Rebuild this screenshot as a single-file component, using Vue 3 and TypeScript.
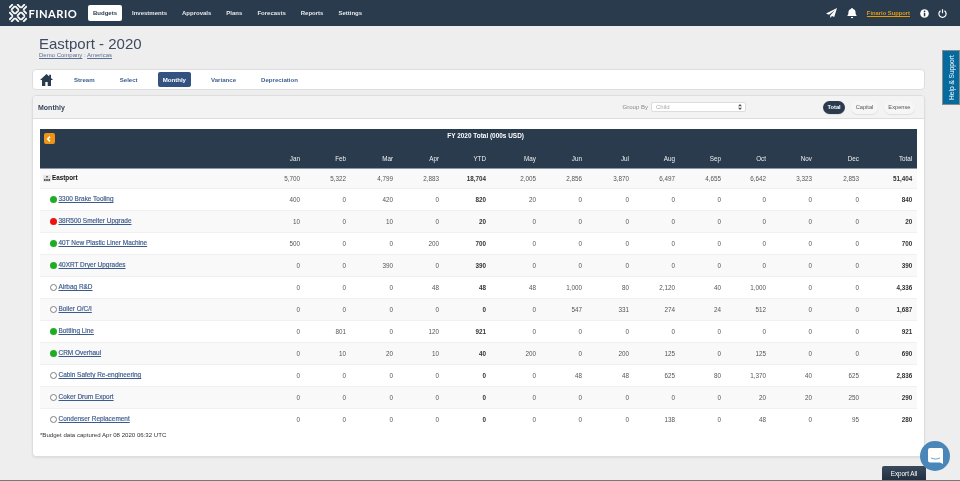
<script setup lang="ts">
const nav = ['Investments', 'Approvals', 'Plans', 'Forecasts', 'Reports', 'Settings']
const tabs = ['Stream', 'Select', 'Monthly', 'Variance', 'Depreciation']
const months = ['Jan', 'Feb', 'Mar', 'Apr', 'YTD', 'May', 'Jun', 'Jul', 'Aug', 'Sep', 'Oct', 'Nov', 'Dec', 'Total']
const widths = [45, 46, 47, 46, 47, 50, 46, 47, 46, 46, 45, 46, 47, 53]
const rollup = ['5,700', '5,322', '4,799', '2,883', '18,704', '2,005', '2,856', '3,870', '6,497', '4,655', '6,642', '3,323', '2,853', '51,404']
type Row = { name: string; status: 'green' | 'red' | 'idle'; values: string[] }
const rows: Row[] = [
  { name: '3300 Brake Tooling', status: 'green', values: ['400', '0', '420', '0', '820', '20', '0', '0', '0', '0', '0', '0', '0', '840'] },
  { name: '38R500 Smelter Upgrade', status: 'red', values: ['10', '0', '10', '0', '20', '0', '0', '0', '0', '0', '0', '0', '0', '20'] },
  { name: '40T New Plastic Liner Machine', status: 'green', values: ['500', '0', '0', '200', '700', '0', '0', '0', '0', '0', '0', '0', '0', '700'] },
  { name: '40XRT Dryer Upgrades', status: 'green', values: ['0', '0', '390', '0', '390', '0', '0', '0', '0', '0', '0', '0', '0', '390'] },
  { name: 'Airbag R&D', status: 'idle', values: ['0', '0', '0', '48', '48', '48', '1,000', '80', '2,120', '40', '1,000', '0', '0', '4,336'] },
  { name: 'Boiler O/C/I', status: 'idle', values: ['0', '0', '0', '0', '0', '0', '547', '331', '274', '24', '512', '0', '0', '1,687'] },
  { name: 'Bottling Line', status: 'green', values: ['0', '801', '0', '120', '921', '0', '0', '0', '0', '0', '0', '0', '0', '921'] },
  { name: 'CRM Overhaul', status: 'green', values: ['0', '10', '20', '10', '40', '200', '0', '200', '125', '0', '125', '0', '0', '690'] },
  { name: 'Cabin Safety Re-engineering', status: 'idle', values: ['0', '0', '0', '0', '0', '0', '48', '48', '625', '80', '1,370', '40', '625', '2,836'] },
  { name: 'Coker Drum Export', status: 'idle', values: ['0', '0', '0', '0', '0', '0', '0', '0', '0', '0', '20', '20', '250', '290'] },
  { name: 'Condenser Replacement', status: 'idle', values: ['0', '0', '0', '0', '0', '0', '0', '0', '138', '0', '48', '0', '95', '280'] },
]
const isBold = (i: number) => i === 4 || i === 13

// Basket-weave logo: alternating blocks of short diagonal strokes.
const weave = (() => {
  let d = ''
  for (let r = 0; r < 3; r++) {
    for (let c = 0; c < 3; c++) {
      const x = c * 6
      const y = r * 6
      if ((r + c) % 2 === 1) {
        d += `M${x + 0.2} ${y + 2.2}l3.6 3.6M${x + 2.2} ${y + 0.2}l3.6 3.6`
      } else {
        d += `M${x + 0.2} ${y + 3.8}l3.6-3.6M${x + 2.2} ${y + 5.8}l3.6-3.6`
      }
    }
  }
  return d
})()
</script>

<template>
  <div class="page">
    <header class="topbar">
      <div class="brand">
        <svg class="logo" viewBox="0 0 18 18" width="18" height="18">
          <path :d="weave" stroke="#fff" stroke-width="1.800" fill="none" />
        </svg>
        <span class="brand-name">FINARIO</span>
      </div>
      <nav class="nav">
        <a class="nav-item active">Budgets</a>
        <a v-for="n in nav" :key="n" class="nav-item">{{ n }}</a>
      </nav>
      <div class="top-right">
        <svg width="11" height="10" viewBox="0 0 11 10"><path d="M11 0 0 5.500l3 1.300L9 2 4.200 7.500V10l1.800-2 2.200 1z" fill="#fff" /></svg>
        <svg width="10" height="11" viewBox="0 0 10 11"><path d="M5 0a1 1 0 0 1 1 1c2 .4 2.600 2 2.600 4 0 1.600.6 2.300 1.400 3H0c.8-.7 1.400-1.400 1.400-3 0-2 .6-3.600 2.600-4a1 1 0 0 1 1-1zM3.800 9h2.400a1.200 1.200 0 0 1-2.400 0z" fill="#fff" /></svg>
        <a class="support">Finario Support</a>
        <svg width="9" height="9" viewBox="0 0 9 9"><circle cx="4.500" cy="4.500" r="4.300" fill="#fff" /><rect x="3.800" y="3.700" width="1.500" height="3.600" fill="#2a3b4e" /><rect x="3.800" y="1.600" width="1.500" height="1.400" fill="#2a3b4e" /></svg>
        <svg class="power" width="9" height="9" viewBox="0 0 9 9" fill="none" stroke="#fff" stroke-width="1.200"><path d="M2.500 1.800a3.600 3.600 0 1 0 4 0M4.500 .3v4" /></svg>
      </div>
    </header>

    <main class="content">
      <div class="heading">
        <h1>Eastport - 2020</h1>
        <div class="crumbs"><a>Demo Company</a> : <a>Americas</a></div>
      </div>

      <div class="toolbar">
        <svg class="home" width="13" height="12" viewBox="0 0 13 12"><path d="M6.500 0 0 6h2v6h3.300V8h2.400v4H11V6h2l-2-1.900V.8H9.200v1.600z" fill="#2a3b4e" /></svg>
        <a v-for="t in tabs" :key="t" class="tab" :class="{ on: t === 'Monthly' }">{{ t }}</a>
      </div>

      <section class="panel">
        <div class="panel-head">
          <span class="panel-title">Monthly</span>
          <div class="group">
            <label>Group By</label>
            <div class="select"><span>Child</span><svg width="4" height="6" viewBox="0 0 4 6"><path d="M2 0 4 2.300H0zM2 6 0 3.700h4z" fill="#555" /></svg></div>
          </div>
          <div class="pills">
            <span class="pill on">Total</span>
            <span class="pill">Capital</span>
            <span class="pill">Expense</span>
          </div>
        </div>

        <div class="panel-body">
          <table class="grid">
            <colgroup>
              <col class="name-col" />
              <col v-for="(w, i) in widths" :key="i" :style="{ width: w + 'px' }" />
            </colgroup>
            <thead>
              <tr class="caption-row">
                <th :colspan="15">
                  <span class="back"><svg width="6" height="6" viewBox="0 0 6 6" fill="none" stroke="#fff" stroke-width="1.500"><path d="M4 .6 1.600 3 4 5.400" /></svg></span>
                  FY 2020 Total (000s USD)
                </th>
              </tr>
              <tr class="month-row">
                <th></th>
                <th v-for="m in months" :key="m">{{ m }}</th>
              </tr>
            </thead>
            <tbody>
              <tr class="rollup">
                <td class="name"><span class="tree"><svg width="6" height="5" viewBox="0 0 6 5"><path d="M2.200 0h1.600v1.500H2.200zM0 3h1.600v2H0zM2.200 3h1.600v2H2.200zM4.400 3H6v2H4.400z" fill="#555" /></svg></span><span class="root">Eastport</span></td>
                <td v-for="(v, i) in rollup" :key="i" :class="{ strong: isBold(i) }">{{ v }}</td>
              </tr>
              <tr v-for="r in rows" :key="r.name" class="item">
                <td class="name"><span class="dot" :class="r.status"></span><a>{{ r.name }}</a></td>
                <td v-for="(v, i) in r.values" :key="i" :class="{ strong: isBold(i) }">{{ v }}</td>
              </tr>
            </tbody>
          </table>
          <p class="note">*Budget data captured Apr 08 2020 06:32 UTC</p>
        </div>
      </section>
    </main>

    <button class="export">Export All</button>
    <div class="help">Help &amp; Support</div>
    <div class="chat">
      <svg width="15" height="16" viewBox="0 0 15 16"><path d="M2 0h11a2 2 0 0 1 2 2v14l-3-1.500H2a2 2 0 0 1-2-2V2a2 2 0 0 1 2-2z" fill="#fff" /><path d="M3 10c3 1.400 6 1.400 9 0" fill="none" stroke="#4a86b8" stroke-width=".8" /></svg>
    </div>
    <div class="edge"></div>
  </div>
</template>

<style>
html, body { margin: 0; background: #eeeeee; }
</style>

<style scoped>
.page {
  position: relative;
  width: 960px;
  height: 481px;
  overflow: hidden;
  background: #eee;
  font-family: "Liberation Sans", Arial, sans-serif;
  color: #333;
  filter: blur(.3px);
}
.topbar {
  height: 26px;
  background: #2a3b4e;
  display: flex;
  align-items: center;
  padding: 0 13px 0 9px;
}
.brand { display: flex; align-items: center; gap: 1.500px; width: 79px; }
.brand-name { font-family: Lato, sans-serif; font-weight: 700; color: #fff; font-size: 11.200px; letter-spacing: .45px; }
.nav { display: flex; align-items: center; }
.nav-item {
  color: #e4e8ec;
  font-size: 6px;
  font-weight: 700;
  padding: 0 7.500px;
  line-height: 16px;
  border-radius: 2px;
}
.nav-item.active { background: #fff; color: #2a3b4e; margin-right: 2.500px; padding: 0 5px; }
.top-right { margin-left: auto; display: flex; align-items: center; gap: 10px; }
.power { margin-left: -1px; }
.support { color: #e39a10; font-size: 5.800px; text-decoration: underline; font-weight: 700; }
.content { padding: 0 35px 0 32px; }
.heading { padding: 9px 0 0 7px; height: 43px; box-sizing: border-box; }
h1 { margin: 0; font-size: 15px; font-weight: 400; color: #3f4a63; line-height: 17px; }
.crumbs { font-size: 6px; color: #5c6f93; line-height: 7px; }
.crumbs a { text-decoration: underline; }
.toolbar {
  height: 21px;
  box-sizing: border-box;
  background: #fff;
  border: 1px solid #ddd;
  border-radius: 4px;
  display: flex;
  align-items: center;
  padding-left: 7px;
  gap: 15px;
}
.home { margin-right: 1px; }
.tab {
  color: #3f5f92;
  font-size: 6.100px;
  font-weight: 700;
  line-height: 15px;
  padding: 0 5px;
  border-radius: 2px;
}
.tab.on { background: #34527f; color: #fff; }
.panel {
  margin-top: 5px;
  height: 362px;
  box-sizing: border-box;
  background: #fff;
  border: 1px solid #ddd;
  border-radius: 4px;
  box-shadow: 0 1px 2px rgba(0, 0, 0, .08);
}
.panel-head {
  height: 23px;
  box-sizing: border-box;
  background: #f3f3f3;
  border-bottom: 1px solid #ddd;
  border-radius: 4px 4px 0 0;
  display: flex;
  align-items: center;
  padding: 0 9px 0 5px;
}
.panel-title { font-size: 7px; font-weight: 700; color: #3a4658; }
.group { margin-left: auto; display: flex; align-items: center; gap: 3px; font-size: 6px; color: #888; }
.select {
  width: 95px;
  height: 10px;
  box-sizing: border-box;
  background: #fff;
  border: 1px solid #ddd;
  border-radius: 2px;
  display: flex;
  align-items: center;
  justify-content: space-between;
  padding: 0 3px 0 4px;
  color: #aaa;
}
.pills { margin-left: 77px; display: flex; align-items: center; gap: 6px; }
.pill {
  font-size: 5.700px;
  color: #555;
  font-weight: 400;
  padding: 0 4.500px;
  line-height: 13px;
  border-radius: 7px;
  background: #f6f6f6;
  box-shadow: 0 1px 1px rgba(0, 0, 0, .08);
}
.pill.on { background: #2a3b4e; color: #fff; font-weight: 700; }
.panel-body { padding: 10px 7px 0 7px; }
.grid {
  width: 877px;
  table-layout: fixed;
  border-collapse: collapse;
  font-size: 6.300px;
}
.name-col { width: 220px; }
.caption-row th { height: 23px; position: relative; background: #2a3b4e; color: #fff; font-size: 6.450px; font-weight: 700; vertical-align: top; padding: 3px 0 0 14px; box-sizing: border-box; }
.back {
  position: absolute;
  left: 3.500px;
  top: 4px;
  width: 11px;
  height: 11px;
  background: #ee9414;
  border-radius: 2px;
  display: flex;
  align-items: center;
  justify-content: center;
}
.month-row th {
  height: 16px;
  box-sizing: border-box;
  background: #2a3b4e;
  color: #eef0f2;
  font-size: 6.300px;
  font-weight: 400;
  text-align: right;
  padding: 0 5px 2px 0;
  vertical-align: middle;
  border-bottom: 1px solid #8a97aa;
}
td {
  text-align: right;
  padding: 0 5px 0 0;
  color: #555;
  height: 22px;
  box-sizing: border-box;
  border-bottom: 1px solid #f0f0f0;
}
tbody tr:last-child td { border-bottom-color: transparent; }
tbody tr:nth-child(odd) td { background: #f9f9f9; }
tbody tr.rollup td { height: 20px; }
td.strong { font-weight: 700; color: #333; }
td.name { text-align: left; padding-left: 10px; white-space: nowrap; }
.rollup td.name { padding-left: 3px; }
.tree {
  display: inline-flex;
  align-items: center;
  justify-content: center;
  width: 8px;
  height: 7px;
  background: #e4e4e4;
  border-radius: 1px;
  margin-right: 1px;
  vertical-align: -1px;
}
.root { color: #111; font-weight: 700; }
.dot {
  display: inline-block;
  width: 7px;
  height: 7px;
  box-sizing: border-box;
  border-radius: 50%;
  margin-right: 1.500px;
  vertical-align: -1.500px;
}
.dot.green { background: #1fae23; }
.dot.red { background: #ee1111; }
.dot.idle { border: 1.500px solid #808080; background: #fff; }
.item a { color: #3c5a8c; text-decoration: underline; font-weight: 400; font-size: 6.450px; -webkit-text-stroke: .16px #3c5a8c; }
.note { margin: 0; font-size: 6.100px; line-height: 8px; color: #333; }
.export {
  position: absolute;
  left: 882px;
  top: 466px;
  width: 44px;
  height: 15px;
  border: 0;
  border-radius: 2px 2px 0 0;
  background: linear-gradient(#3a4a5c, #1f2f40);
  color: #fff;
  font: 6.300px "Liberation Sans", Arial, sans-serif;
  padding: 0;
}
.help {
  position: absolute;
  left: 942px;
  top: 50px;
  width: 18px;
  height: 55px;
  box-sizing: border-box;
  border: 1px solid #8a8a8a;
  background: #056a9e;
  color: #fff;
  font-size: 6.600px;
  writing-mode: vertical-rl;
  transform: rotate(180deg);
  display: flex;
  align-items: center;
  justify-content: center;
}
.chat {
  position: absolute;
  left: 920px;
  top: 441px;
  width: 30px;
  height: 30px;
  border-radius: 50%;
  background: #4a86b8;
  display: flex;
  align-items: center;
  justify-content: center;
}
.edge { position: absolute; left: 0; right: 0; bottom: 0; height: 1px; background: #777; }
</style>
